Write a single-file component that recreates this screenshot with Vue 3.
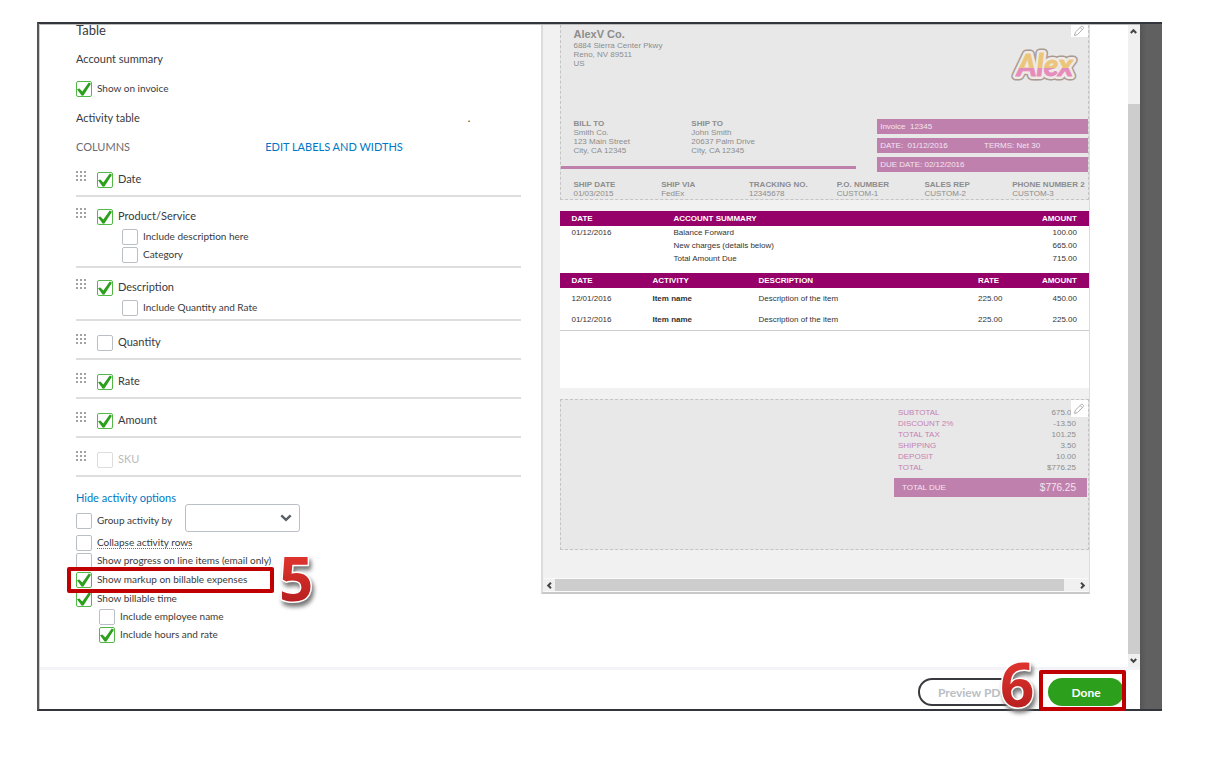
<script setup>
import { ref, reactive } from 'vue'

const showSummary = ref(true)
const columns = reactive([
  { id: 'date', label: 'Date', on: true, kind: 'first', subs: [] },
  { id: 'product', label: 'Product/Service', on: true, kind: 'nested', subs: [
    { id: 'desc-here', label: 'Include description here', on: false },
    { id: 'category', label: 'Category', on: false },
  ] },
  { id: 'description', label: 'Description', on: true, kind: 'nested', subs: [
    { id: 'qty-rate', label: 'Include Quantity and Rate', on: false },
  ] },
  { id: 'quantity', label: 'Quantity', on: false, kind: 'plain', subs: [] },
  { id: 'rate', label: 'Rate', on: true, kind: 'plain', subs: [] },
  { id: 'amount', label: 'Amount', on: true, kind: 'plain', subs: [] },
  { id: 'sku', label: 'SKU', on: false, kind: 'plain', disabled: true, subs: [] },
])
const groupBy = ref(false)
const options = reactive([
  { id: 'collapse', label: 'Collapse activity rows', on: false, hint: true },
  { id: 'progress', label: 'Show progress on line items (email only)', on: false },
  { id: 'markup', label: 'Show markup on billable expenses', on: true, marked: true },
  { id: 'time', label: 'Show billable time', on: true },
  { id: 'employee', label: 'Include employee name', on: false, inner: true },
  { id: 'hours', label: 'Include hours and rate', on: true, inner: true },
])
const shipping = [
  ['SHIP DATE', '01/03/2015'],
  ['SHIP VIA', 'FedEx'],
  ['TRACKING NO.', '12345678'],
  ['P.O. NUMBER', 'CUSTOM-1'],
  ['SALES REP', 'CUSTOM-2'],
  ['PHONE NUMBER 2', 'CUSTOM-3'],
]
const summary = [
  ['01/12/2016', 'Balance Forward', '100.00'],
  ['', 'New charges (details below)', '665.00'],
  ['', 'Total Amount Due', '715.00'],
]
const activity = [
  ['12/01/2016', 'Item name', 'Description of the item', '225.00', '450.00'],
  ['01/12/2016', 'Item name', 'Description of the item', '225.00', '225.00'],
]
const totals = [
  ['SUBTOTAL', '675.00'],
  ['DISCOUNT 2%', '-13.50'],
  ['TOTAL TAX', '101.25'],
  ['SHIPPING', '3.50'],
  ['DEPOSIT', '10.00'],
  ['TOTAL', '$776.25'],
]
const dots = [1, 5, 9]
</script>

<template>
  <div class="page">
    <div class="window">
      <div class="app">
        <div class="body">
          <section class="settings">
            <h2 class="title">Table</h2>
            <h3 class="heading">Account summary</h3>
            <div class="check show-invoice">
              <input id="summary" v-model="showSummary" type="checkbox">
              <label for="summary">Show on invoice</label>
            </div>
            <h3 class="heading activity-head"><span>Activity table</span><span class="dot">.</span></h3>
            <div class="columns-head">
              <span>COLUMNS</span>
              <a href="#">EDIT LABELS AND WIDTHS</a>
            </div>
            <ul class="columns">
              <li v-for="c in columns" :key="c.id" :class="c.kind">
                <svg class="grip" width="10" height="10" viewBox="0 0 10 10" aria-hidden="true">
                  <template v-for="y in dots" :key="y">
                    <circle v-for="x in dots" :key="x" :cx="x" :cy="y" r="0.9" fill="#777" />
                  </template>
                </svg>
                <div class="column-body">
                  <div class="check main">
                    <input :id="c.id" v-model="c.on" type="checkbox" :disabled="c.disabled">
                    <label :for="c.id">{{ c.label }}</label>
                  </div>
                  <div v-for="s in c.subs" :key="s.id" class="check sub">
                    <input :id="s.id" v-model="s.on" type="checkbox">
                    <label :for="s.id">{{ s.label }}</label>
                  </div>
                </div>
              </li>
            </ul>
            <a class="hide" href="#">Hide activity options</a>
            <div class="group-row">
              <div class="check option">
                <input id="group" v-model="groupBy" type="checkbox">
                <label for="group">Group activity by</label>
              </div>
              <div class="select">
                <select aria-label="Group activity by"><option></option></select>
                <svg width="12" height="8" viewBox="0 0 12 8" aria-hidden="true">
                  <path d="M1.3 1.3 6 5.8 10.7 1.3" fill="none" stroke="#5a5e66" stroke-width="2.4" />
                </svg>
              </div>
            </div>
            <div
              v-for="o in options" :key="o.id" class="check option"
              :class="{ inner: o.inner, marked: o.marked, hint: o.hint }"
            >
              <input :id="o.id" v-model="o.on" type="checkbox">
              <label :for="o.id">{{ o.label }}</label>
              <svg v-if="o.marked" class="number five" width="50" height="64" viewBox="0 0 50 64">
                <defs>
                  <linearGradient id="red5" x1="0" y1="0" x2="0" y2="1">
                    <stop offset="0.2" stop-color="#e2352f" />
                    <stop offset="0.9" stop-color="#b01c1c" />
                  </linearGradient>
                </defs>
                <text x="8" y="50" fill="url(#red5)">5</text>
              </svg>
            </div>
          </section>

          <section class="preview">
            <div class="sheet">
              <div class="letterhead">
                <span class="edit cut">
                  <svg width="12" height="12" viewBox="0 0 12 12" aria-hidden="true">
                    <path d="M1.5 10.5 2.3 7.2 8.3 1.4Q9.2.8 10 1.7 11 2.7 10.3 3.6L4.5 9.6ZM7.2 2.5 9.3 4.7" />
                  </svg>
                </span>
                <div class="sender">
                  <div>
                    <strong>AlexV Co.</strong>
                    <p>6884 Sierra Center Pkwy</p>
                    <p>Reno, NV 89511</p>
                    <p>US</p>
                  </div>
                  <svg class="logo" width="68" height="42" viewBox="0 0 68 42" role="img" aria-label="Alex">
                    <defs>
                      <linearGradient id="tone" x1="0" y1="0" x2="0" y2="42" gradientUnits="userSpaceOnUse">
                        <stop offset="0.6" stop-color="#ebc57c" />
                        <stop offset="0.6" stop-color="#e58cbc" />
                      </linearGradient>
                    </defs>
                    <text x="6" y="33" stroke="#a99a92" stroke-width="9">Alex</text>
                    <text x="6" y="33" stroke="#efeae6" stroke-width="6">Alex</text>
                    <text x="6" y="33" fill="url(#tone)" stroke="url(#tone)" stroke-width="1">Alex</text>
                  </svg>
                </div>
                <div class="parties">
                  <div class="addresses">
                    <div class="pair">
                      <div>
                        <strong>BILL TO</strong>
                        <p>Smith Co.</p>
                        <p>123 Main Street</p>
                        <p>City, CA 12345</p>
                      </div>
                      <div>
                        <strong>SHIP TO</strong>
                        <p>John Smith</p>
                        <p>20637 Palm Drive</p>
                        <p>City, CA 12345</p>
                      </div>
                    </div>
                    <div class="rule"></div>
                  </div>
                  <div class="bars">
                    <div>Invoice&nbsp; 12345</div>
                    <div class="terms"><span>DATE:&nbsp; 01/12/2016</span><span>TERMS: Net 30</span></div>
                    <div>DUE DATE: 02/12/2016</div>
                  </div>
                </div>
                <div class="shipping">
                  <div v-for="s in shipping" :key="s[0]"><strong>{{ s[0] }}</strong><p>{{ s[1] }}</p></div>
                </div>
              </div>

              <div class="tables">
                <table class="summary">
                  <thead>
                    <tr><th class="c-sumdate">DATE</th><th>ACCOUNT SUMMARY</th><th class="c-amount">AMOUNT</th></tr>
                  </thead>
                  <tbody>
                    <tr v-for="r in summary" :key="r[1]"><td>{{ r[0] }}</td><td>{{ r[1] }}</td><td>{{ r[2] }}</td></tr>
                  </tbody>
                </table>
                <table class="lines">
                  <thead>
                    <tr>
                      <th class="c-date">DATE</th><th class="c-activity">ACTIVITY</th><th>DESCRIPTION</th>
                      <th class="c-rate">RATE</th><th class="c-amount">AMOUNT</th>
                    </tr>
                  </thead>
                  <tbody>
                    <tr v-for="r in activity" :key="r[0]">
                      <td>{{ r[0] }}</td><td><strong>{{ r[1] }}</strong></td><td>{{ r[2] }}</td>
                      <td>{{ r[3] }}</td><td>{{ r[4] }}</td>
                    </tr>
                  </tbody>
                </table>
              </div>

              <div class="footer-block">
                <span class="edit">
                  <svg width="12" height="12" viewBox="0 0 12 12" aria-hidden="true">
                    <path d="M1.5 10.5 2.3 7.2 8.3 1.4Q9.2.8 10 1.7 11 2.7 10.3 3.6L4.5 9.6ZM7.2 2.5 9.3 4.7" />
                  </svg>
                </span>
                <dl class="totals">
                  <div v-for="t in totals" :key="t[0]"><dt>{{ t[0] }}</dt><dd>{{ t[1] }}</dd></div>
                </dl>
                <div class="due"><span>TOTAL DUE</span><b>$776.25</b></div>
              </div>
            </div>
            <div class="hscroll">
              <svg width="7" height="7" viewBox="0 0 7 7"><path d="M5 .8 2.2 3.5 5 6.2" /></svg>
              <i></i>
              <svg width="7" height="7" viewBox="0 0 7 7"><path d="M2 .8 4.8 3.5 2 6.2" /></svg>
            </div>
          </section>

          <div class="vscroll">
            <svg width="7" height="7" viewBox="0 0 7 7"><path d="M.8 5 3.5 2.2 6.2 5" /></svg>
            <i></i>
            <svg width="7" height="7" viewBox="0 0 7 7"><path d="M.8 2 3.5 4.8 6.2 2" /></svg>
          </div>
        </div>

        <footer class="actions">
          <div class="preview-wrap">
            <button class="pdf" type="button">Preview PDF</button>
            <svg class="number six" width="50" height="64" viewBox="0 0 50 64">
              <defs>
                <linearGradient id="red6" x1="0" y1="0" x2="0" y2="1">
                  <stop offset="0.2" stop-color="#e2352f" />
                  <stop offset="0.9" stop-color="#b01c1c" />
                </linearGradient>
              </defs>
              <text x="8" y="50" fill="url(#red6)">6</text>
            </svg>
          </div>
          <div class="done-wrap"><button class="done" type="button">Done</button></div>
        </footer>
      </div>
      <div class="edge"></div>
    </div>
  </div>
</template>

<style>
body { background: #fff; }
</style>

<style scoped>
* { box-sizing: border-box; }
h2, h3, p, ul, dl, dd { margin: 0; padding: 0; font-weight: 400; }
.page { padding: 22px 43px 50px 37px; font-family: Lato, "Noto Sans", sans-serif; color: #393a3d; }
.window { display: flex; border: 2px solid #33353d; border-left-color: #555; border-right: 0; }
.app { flex: 1; min-width: 0; background: #fff; border-left: 1px solid #ccc; }
.edge { width: 22px; background: linear-gradient(90deg, #555, #606060 6px); }
.body { display: grid; grid-template-columns: 501fr 586fr 12px; min-height: 646px; border-top: 1px solid #bbb; border-bottom: 3px solid #f4f4f8; }

.settings { padding: 0 20px 20px 36px; }
.title { font-size: 13px; line-height: 16px; margin-top: -3px; }
.heading { font-size: 11px; line-height: 16px; margin-top: 13px; }
.check { display: flex; align-items: center; }
input { appearance: none; flex: none; display: block; width: 16px; height: 16px; margin: 0; border: 1px solid #babec5; border-radius: 2px; background: #fff; }
input:checked { border-color: #53b847; }
input:checked::before { content: ""; display: block; width: 14px; height: 14px; background: #2ca01c; clip-path: polygon(0 52%, 17% 46%, 38% 68%, 84% 4%, 100% 12%, 46% 96%, 34% 98%); }
input:disabled { border-color: #dcdcdc; }
input:disabled + label { color: #bbb; }
.show-invoice { margin-top: 14px; gap: 5px; font-size: 10px; line-height: 16px; }
.activity-head { display: flex; margin-top: 13px; }
.dot { margin-left: auto; padding-right: 51px; }
.columns-head { display: grid; grid-template-columns: 189fr 256fr; margin-top: 13px; font-size: 11px; line-height: 16px; color: #6b6c72; }
a { color: #0077c5; text-decoration: none; }
.columns { list-style: none; margin-top: 17px; }
.columns li { display: flex; gap: 11px; border-bottom: 2px solid #dedede; padding-bottom: 7px; }
.columns li.nested { padding: 12px 0 3px; }
.columns li.plain { padding-top: 14px; }
.grip { flex: none; margin-top: -1px; }
.column-body { display: flex; flex-direction: column; gap: 2px; }
.main { gap: 5px; font-size: 11px; line-height: 16px; }
.main label { margin-top: -3px; }
.sub { margin-left: 25px; gap: 5px; font-size: 10px; line-height: 16px; }
.show-invoice label, .sub label, .option label { margin-top: -2px; }
.sub:nth-child(2) { margin-top: 2px; }
.hide { display: block; width: max-content; margin-top: 13px; font-size: 11px; line-height: 16px; }
.group-row { display: grid; grid-template-columns: 109px 115px; height: 28px; margin-top: -2px; }
.option { position: relative; gap: 5px; font-size: 10px; line-height: 16px; height: 18px; }
.group-row .option { margin-top: 8px; }
.select { position: relative; height: 28px; }
select { appearance: none; width: 100%; height: 100%; border: 1px solid #babec5; border-radius: 3px; background: #fff; }
.select svg { position: absolute; right: 8px; top: 10px; }
.hint { margin-top: 2px; }
.hint label { border-bottom: 1px dotted #6b6c72; line-height: 12px; }
.inner { margin-left: 23px; }
.marked { height: 20px; z-index: 2; }
.marked::before { content: ""; position: absolute; left: -9px; top: -3px; width: 199px; height: 18px; border: 4px solid #c00000; border-radius: 2px; pointer-events: none; }
.number { position: absolute; z-index: 3; overflow: visible; pointer-events: none; filter: drop-shadow(2px 4px 2px #777); }
.number text { font: 700 60px "Open Sans", "Noto Sans", sans-serif; stroke: #fff; stroke-width: 3px; paint-order: stroke; stroke-linejoin: round; }
.five { left: 195px; top: -19px; }

.preview { display: flex; flex-direction: column; align-self: start; margin-right: 38px; border: 2px solid #dcdcdc; border-top: 0; border-right-width: 1px; border-bottom-color: #c8c8c8; background: #f1f1f1; font: 8px/9px "Liberation Sans", Arial, sans-serif; color: #8d8d8d; }
.sheet { padding-left: 17px; }
.letterhead, .footer-block { position: relative; background: #e8e8e8; border: 1px dashed #c4c4c4; }
.letterhead { border-top: 0; padding: 3px 0 0; height: 175px; }
strong { display: block; font-weight: 700; }
.edit { position: absolute; z-index: 1; top: 0; right: 0; width: 17px; height: 17px; background: #fff; display: grid; place-items: center; }
.edit path { fill: none; stroke: #b0b0b0; stroke-width: 1; }
.cut { height: 12px; align-items: end; overflow: hidden; }
.sender { display: flex; justify-content: space-between; height: 91px; padding: 0 9px 0 12px; }
.sender strong { font-size: 11px; line-height: 13px; }
.logo { margin-top: 15px; }
.logo text { font: italic 700 30px Lato, sans-serif; stroke-linejoin: round; fill: #efeae6; }
.logo text:last-child { fill: url(#tone); }
.parties { display: grid; grid-template-columns: 295fr 211fr; gap: 21px; }
.pair { display: grid; grid-template-columns: 118fr 165fr; padding-left: 12px; }
.rule { height: 3px; margin-top: 11px; background: #c080ae; }
.bars { display: grid; gap: 4px; color: #f2e6ef; line-height: 15px; }
.bars div { padding-left: 3px; background: #c080ae; }
.bars .terms { display: grid; grid-template-columns: 1fr 1fr; }
.shipping { display: grid; grid-template-columns: repeat(5, 88fr) 76fr; margin-top: 8px; padding-left: 12px; white-space: nowrap; }

.tables { margin-top: 11px; height: 177px; background: #fff; color: #333; }
table { width: 100%; border-collapse: collapse; table-layout: fixed; }
th, td { padding: 0; text-align: left; }
th:first-child, td:first-child { padding-left: 11px; }
th:last-child, td:last-child { padding-right: 12px; text-align: right; }
th { height: 15px; background: #950069; color: #fff; }
.c-sumdate { width: 113px; }
.c-date { width: 92px; }
.c-activity { width: 106px; }
.c-rate { width: 51px; }
.c-amount { width: 60px; }
.summary td { height: 13px; }
.lines { margin-top: 8px; border-bottom: 1px solid #ccc; }
.lines td { height: 21px; }

.footer-block { margin-top: 11px; height: 151px; padding: 7px 1px 0 0; }
.totals { width: 189px; margin-left: auto; padding-right: 11px; line-height: 11px; }
.totals div { display: flex; justify-content: space-between; }
dt { color: #c67fb2; }
.due { display: flex; justify-content: space-between; align-items: center; width: 193px; height: 19px; margin: 5px 0 0 auto; padding: 0 11px 0 8px; background: #c080ae; color: #f2e6ef; }
.due b { font-size: 10px; font-weight: 400; }
.hscroll { display: flex; align-items: center; justify-content: space-between; height: 14px; margin-top: 28px; padding: 0 3px; background: #f0f0f0; border-top: 1px solid #fafafa; border-bottom: 1px solid #fafafa; }
.hscroll i { flex: 1; height: 12px; margin: 0 15px 0 2px; background: #cdcdcd; }
.hscroll path, .vscroll path { fill: none; stroke: #444; stroke-width: 2; }
.vscroll { display: flex; flex-direction: column; align-items: center; padding: 3px 0; background: #f0f0f0; }
.vscroll i { flex: 1; width: 12px; margin: 69px 0 3px; background: #cdcdcd; }

.actions { display: flex; justify-content: flex-end; height: 39px; padding-right: 14px; }
button { height: 28px; border-radius: 14px; font: 700 12px Lato, sans-serif; }
.preview-wrap { position: relative; margin: 8px 11px 0 0; }
.pdf { width: 110px; padding: 0 0 0 18px; border: 2px solid #393a3d; background: #fff; color: #babec5; text-align: left; white-space: nowrap; }
.six { right: -14px; top: -21px; }
.done-wrap { position: relative; width: 87px; height: 41px; padding: 8px 2px 0 9px; }
.done-wrap::after { content: ""; position: absolute; inset: 0; border: 4px solid #c00000; border-radius: 2px; pointer-events: none; }
.done { width: 100%; border: 0; background: #2ca01c; color: #fff; }
</style>
